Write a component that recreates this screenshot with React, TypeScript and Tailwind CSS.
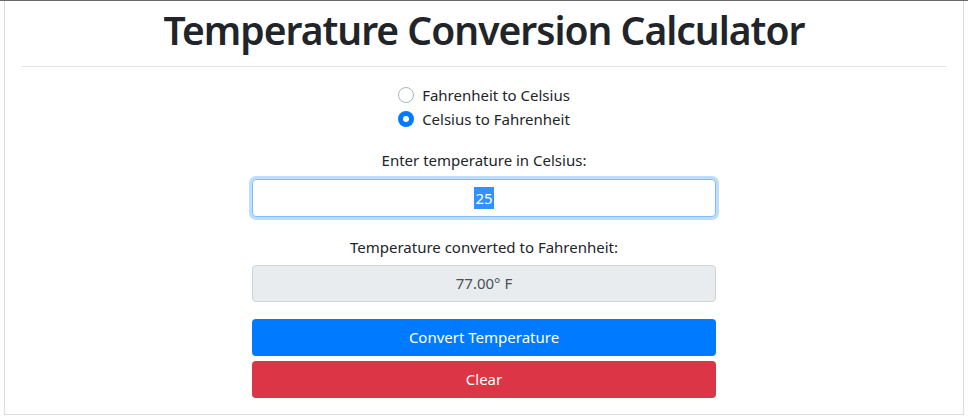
import { useState } from 'react';

// Calculadora simples de conversao de temperatura (estilo bootstrap)

export default function App() {
  var [mode, setMode] = useState<'f2c' | 'c2f'>('c2f');
  var [value, setValue] = useState('25');

  var num = parseFloat(value);
  var result = '';
  if (!isNaN(num)) {
    result = mode === 'c2f'
      ? ((num * 9) / 5 + 32).toFixed(2) + '° F'
      : (((num - 32) * 5) / 9).toFixed(2) + '° C';
  }

  var fromName = mode === 'c2f' ? 'Celsius' : 'Fahrenheit';
  var toName = mode === 'c2f' ? 'Fahrenheit' : 'Celsius';

  return (
    <div
      className="min-h-[420px] bg-white border-t border-[#6b6b6b] text-[#212529]"
      style={{ fontFamily: '"Noto Sans", "Open Sans", Arial, sans-serif' }}
    >
      <div className="mx-[4px] border-x border-b border-[#dcdcdc] h-[414px] px-4">
        <h1 className="text-center text-[39px] leading-[48px] font-semibold pt-[5px] tracking-[-1px]">
          Temperature Conversion Calculator
        </h1>
        <hr className="mt-[12px] border-t border-[#e3e3e3]" />

        <div className="flex flex-col items-center mt-[16px]">
          <div className="flex flex-col">
            <label className="flex items-center h-6 cursor-pointer" onClick={function () { setMode('f2c'); }}>
              <Radio checked={mode === 'f2c'} />
              <span className="ml-[8px] text-[15px]">Fahrenheit to Celsius</span>
            </label>
            <label className="flex items-center h-6 cursor-pointer" onClick={function () { setMode('c2f'); }}>
              <Radio checked={mode === 'c2f'} />
              <span className="ml-[8px] text-[15px]">Celsius to Fahrenheit</span>
            </label>
          </div>
        </div>

        <div className="w-[464px] mx-auto">
          <p className="text-center text-[15px] leading-6 mt-[17px]">Enter temperature in {fromName}:</p>
          <div className="mt-[7px] h-[38px] rounded-[4px] border border-[#80bdff] shadow-[0_0_0_3px_rgba(0,123,255,0.25)] bg-white flex items-center justify-center">
            <span className="text-[15px] leading-[22px] bg-[#3390ff] text-white px-[1px]">{value}</span>
          </div>

          <p className="text-center text-[15px] leading-6 mt-[18px]">Temperature converted to {toName}:</p>
          <div className="mt-[6px] h-[37px] rounded-[4px] border border-[#ced4da] bg-[#e9ecef] flex items-center justify-center text-[15px] text-[#495057]">
            {result}
          </div>

          <button
            className="mt-[17px] w-full h-[37px] rounded-[4px] bg-[#007bff] text-white text-[15px] flex items-center justify-center"
            onClick={function () { setValue(value); }}
          >
            Convert Temperature
          </button>
          <button
            className="mt-[5px] w-full h-[37px] rounded-[4px] bg-[#dc3545] text-white text-[15px] flex items-center justify-center"
            onClick={function () { setValue(''); }}
          >
            Clear
          </button>
        </div>
      </div>
    </div>
  );
}

function Radio(props: { checked: boolean }) {
  if (props.checked) {
    return (
      <span className="w-4 h-4 rounded-full bg-[#007bff] flex items-center justify-center">
        <span className="w-[6px] h-[6px] rounded-full bg-white" />
      </span>
    );
  }
  return <span className="w-4 h-4 rounded-full border border-[#adb5bd] bg-white" />;
}
